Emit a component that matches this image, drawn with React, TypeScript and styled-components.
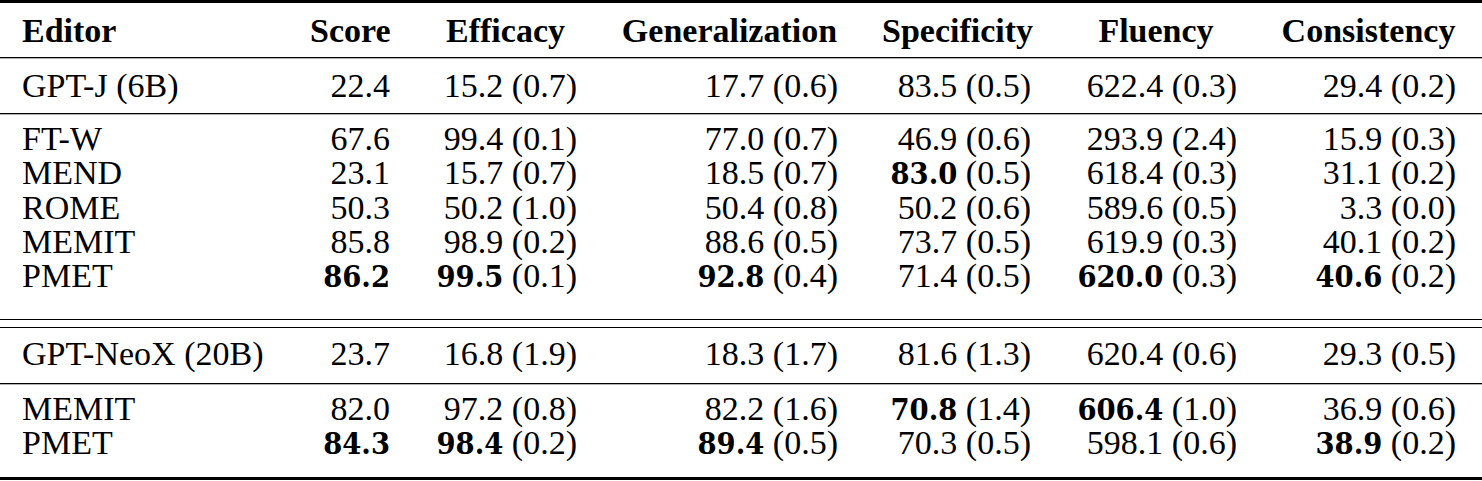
import React, { FunctionComponent } from "react"
import styled, { createGlobalStyle } from "styled-components"

const GlobalStyle = createGlobalStyle`
  html,
  body {
    margin: 0;
    padding: 0;
    background: #fff;
  }
  body {
    color: #000;
    font-family: "Liberation Serif", "Times New Roman", serif;
  }
`

const Table = styled.div`
  width: 1482px;
`

const Rule = styled.div<{ $heavy?: boolean }>`
  height: ${(p) => (p.$heavy ? 3 : 1)}px;
  background: #000;
  box-shadow: ${(p) => (p.$heavy ? "none" : "0 1px 0 rgba(0, 0, 0, 0.3)")};
`

const DoubleRule = styled.div`
  height: 7.5px;
  border-top: 1px solid #000;
  border-bottom: 1px solid #000;
`

const Group = styled.div<{ $top: number; $bottom: number }>`
  padding: ${(p) => p.$top}px 0 ${(p) => p.$bottom}px;
`

const Row = styled.div<{ $head?: boolean }>`
  display: grid;
  grid-template-columns: 244px 80px 143px 217px 149px 162px 175px;
  column-gap: 44px;
  padding-left: 22px;
  font-size: 34px;
  line-height: 34.2px;
  font-weight: ${(p) => (p.$head ? 700 : 400)};
  white-space: nowrap;
`

const Cell = styled.div<{ $align: "left" | "right" | "center" }>`
  text-align: ${(p) => p.$align};
`

// stands in for the \mathbf digits of Computer Modern
const Best = styled.span`
  font-family: "DejaVu Serif Condensed", "DejaVu Serif", serif;
  font-stretch: semi-condensed;
  font-weight: 700;
  font-size: 30.5px;
  line-height: 1;
`

interface Value {
  v: string
  sd?: string
  best?: boolean
}

interface Line {
  editor: string
  values: Value[]
}

const columns = [
  "Score",
  "Efficacy",
  "Generalization",
  "Specificity",
  "Fluency",
  "Consistency",
]

const r = (v: string, sd?: string, best?: boolean): Value => ({ v, sd, best })

const gptJ: Line = {
  editor: "GPT-J (6B)",
  values: [
    r("22.4"),
    r("15.2", "0.7"),
    r("17.7", "0.6"),
    r("83.5", "0.5"),
    r("622.4", "0.3"),
    r("29.4", "0.2"),
  ],
}

const gptJEditors: Line[] = [
  {
    editor: "FT-W",
    values: [
      r("67.6"),
      r("99.4", "0.1"),
      r("77.0", "0.7"),
      r("46.9", "0.6"),
      r("293.9", "2.4"),
      r("15.9", "0.3"),
    ],
  },
  {
    editor: "MEND",
    values: [
      r("23.1"),
      r("15.7", "0.7"),
      r("18.5", "0.7"),
      r("83.0", "0.5", true),
      r("618.4", "0.3"),
      r("31.1", "0.2"),
    ],
  },
  {
    editor: "ROME",
    values: [
      r("50.3"),
      r("50.2", "1.0"),
      r("50.4", "0.8"),
      r("50.2", "0.6"),
      r("589.6", "0.5"),
      r("3.3", "0.0"),
    ],
  },
  {
    editor: "MEMIT",
    values: [
      r("85.8"),
      r("98.9", "0.2"),
      r("88.6", "0.5"),
      r("73.7", "0.5"),
      r("619.9", "0.3"),
      r("40.1", "0.2"),
    ],
  },
  {
    editor: "PMET",
    values: [
      r("86.2", undefined, true),
      r("99.5", "0.1", true),
      r("92.8", "0.4", true),
      r("71.4", "0.5"),
      r("620.0", "0.3", true),
      r("40.6", "0.2", true),
    ],
  },
]

const neoX: Line = {
  editor: "GPT-NeoX (20B)",
  values: [
    r("23.7"),
    r("16.8", "1.9"),
    r("18.3", "1.7"),
    r("81.6", "1.3"),
    r("620.4", "0.6"),
    r("29.3", "0.5"),
  ],
}

const neoXEditors: Line[] = [
  {
    editor: "MEMIT",
    values: [
      r("82.0"),
      r("97.2", "0.8"),
      r("82.2", "1.6"),
      r("70.8", "1.4", true),
      r("606.4", "1.0", true),
      r("36.9", "0.6"),
    ],
  },
  {
    editor: "PMET",
    values: [
      r("84.3", undefined, true),
      r("98.4", "0.2", true),
      r("89.4", "0.5", true),
      r("70.3", "0.5"),
      r("598.1", "0.6"),
      r("38.9", "0.2", true),
    ],
  },
]

const DataRow: FunctionComponent<{ line: Line }> = ({ line }) => (
  <Row>
    <Cell $align="left">{line.editor}</Cell>
    {line.values.map((value, i) => (
      <Cell $align="right" key={i}>
        {value.best ? <Best>{value.v}</Best> : value.v}
        {value.sd && ` (${value.sd})`}
      </Cell>
    ))}
  </Row>
)

const App: FunctionComponent = () => (
  <>
    <GlobalStyle />
    <Table>
      <Rule $heavy />
      <Group $top={11} $bottom={9}>
        <Row $head>
          <Cell $align="left">Editor</Cell>
          {columns.map((name) => (
            <Cell $align="center" key={name}>
              {name}
            </Cell>
          ))}
        </Row>
      </Group>
      <Rule />
      <Group $top={10.4} $bottom={10.2}>
        <DataRow line={gptJ} />
      </Group>
      <Rule />
      <Group $top={8.3} $bottom={25.7}>
        {gptJEditors.map((line) => (
          <DataRow line={line} key={line.editor} />
        ))}
      </Group>
      <DoubleRule />
      <Group $top={8.4} $bottom={11.6}>
        <DataRow line={neoX} />
      </Group>
      <Rule />
      <Group $top={8.4} $bottom={16.2}>
        {neoXEditors.map((line) => (
          <DataRow line={line} key={line.editor} />
        ))}
      </Group>
      <Rule $heavy />
    </Table>
  </>
)

export default App
